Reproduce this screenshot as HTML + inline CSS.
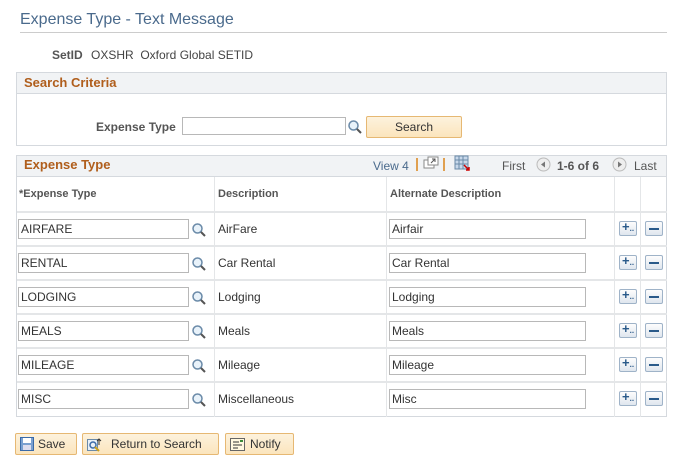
<!DOCTYPE html>
<html><head><style>
*{box-sizing:border-box;margin:0;padding:0}
body{width:699px;height:466px;background:#fff;font-family:"Liberation Sans",Arial,sans-serif;font-size:12px;color:#333;position:relative;overflow:hidden}
.a{position:absolute}
.lbl{font-weight:bold;color:#555}
.inp{position:absolute;height:20px;border:1px solid #b8b8b8;background:#fff;font-size:12px;color:#333;padding:2px 2px;line-height:14px}
.mag{position:absolute;width:16px;height:16px}
.hl{position:absolute;height:1px;background:#e4e6e8}
.vl{position:absolute;width:1px;background:#e4e6e8}
.pb{position:absolute;width:18px;height:15px;border:1px solid #9fb3c8;background:linear-gradient(#fdfdfd,#dfe6ee);border-radius:2px}
.btn{position:absolute;height:22px;border:1px solid #e6b873;background:linear-gradient(#fdf2dd,#fbe5bd);border-radius:2px;font-size:12px;color:#333;line-height:20px}
.th{position:absolute;font-weight:bold;color:#555;font-size:11px}
.td{position:absolute;font-size:12px;color:#333}
</style></head><body>
<div class="a" style="left:20px;top:11px;font-size:16px;color:#4a6a8c">Expense Type - Text Message</div>
<div class="a" style="left:20px;top:32px;width:647px;height:1px;background:#ccc"></div>
<div class="a lbl" style="left:52px;top:48px;font-size:12px">SetID</div>
<div class="a" style="left:91px;top:48px;color:#444">OXSHR&nbsp;&nbsp;Oxford Global SETID</div>

<div class="a" style="left:16px;top:72px;width:651px;height:74px;border:1px solid #d5d9de"></div>
<div class="a" style="left:17px;top:73px;width:649px;height:21px;background:#f1f3f5;border-bottom:1px solid #d5d9de"></div>
<div class="a" style="left:24px;top:75px;font-weight:bold;font-size:13px;color:#b05e1c">Search Criteria</div>
<div class="a lbl" style="left:96px;top:120px;font-size:12px">Expense Type</div>
<div class="inp" style="left:182px;top:117px;width:164px;height:18px"></div>
<svg class="mag" style="left:347px;top:119px" viewBox="0 0 16 16"><circle cx="6.5" cy="6.5" r="4.5" fill="#e8f2fa" stroke="#6a8aa8" stroke-width="1.5"/><line x1="10" y1="10" x2="14" y2="14" stroke="#555" stroke-width="2"/></svg>
<div class="btn" style="left:366px;top:116px;width:96px;text-align:center">Search</div>

<div class="a" style="left:16px;top:155px;width:651px;height:262px;border:1px solid #d5d9de;border-top:none"></div>
<div class="a" style="left:16px;top:155px;width:651px;height:22px;background:#f1f3f5;border:1px solid #d5d9de"></div>
<div class="a" style="left:24px;top:157px;font-weight:bold;font-size:13px;color:#b05e1c">Expense Type</div>
<div class="a" style="left:373px;top:159px;color:#4a6a8c">View 4</div>
<div class="a" style="left:416px;top:158px;width:2px;height:13px;background:#e0a050"></div>
<svg class="a" style="left:423px;top:156px" width="16" height="14" viewBox="0 0 16 14"><rect x="1" y="4" width="10" height="8" fill="#fff" stroke="#888"/><rect x="5" y="1" width="10" height="8" fill="#fff" stroke="#888"/><path d="M8 7l4-4M9 3h3v3" stroke="#555" fill="none"/></svg>
<div class="a" style="left:443px;top:158px;width:2px;height:13px;background:#e0a050"></div>
<svg class="a" style="left:454px;top:155px" width="16" height="16" viewBox="0 0 16 16"><rect x="1" y="1" width="13" height="13" fill="#c8d8ea" stroke="#6a8aa8"/><path d="M1 5h13M1 9h13M5 1v13M9 1v13" stroke="#6a8aa8"/><path d="M10 10l5 5M12 15h3v-3" stroke="#c00" stroke-width="1.5" fill="none"/></svg>
<div class="a" style="left:502px;top:159px;color:#555">First</div>
<svg class="a" style="left:536px;top:157px" width="15" height="15"><circle cx="7.5" cy="7.5" r="6.5" fill="#eee" stroke="#bbb"/><path d="M9 4.5v6l-4-3z" fill="#777"/></svg>
<div class="a" style="left:557px;top:159px;font-weight:bold;color:#555">1-6 of 6</div>
<svg class="a" style="left:612px;top:157px" width="15" height="15"><circle cx="7.5" cy="7.5" r="6.5" fill="#eee" stroke="#bbb"/><path d="M6 4.5v6l4-3z" fill="#777"/></svg>
<div class="a" style="left:634px;top:159px;color:#555">Last</div>

<div class="vl" style="left:214px;top:177px;height:240px"></div>
<div class="vl" style="left:386px;top:177px;height:240px"></div>
<div class="vl" style="left:614px;top:177px;height:240px"></div>
<div class="vl" style="left:640px;top:177px;height:240px"></div>
<div class="th" style="left:19px;top:188px">*Expense Type</div>
<div class="th" style="left:218px;top:188px">Description</div>
<div class="th" style="left:390px;top:188px">Alternate Description</div>

<div class="hl" style="left:17px;top:211px;width:650px;height:2px"></div>
<div class="hl" style="left:17px;top:245px;width:650px;height:2px"></div>
<div class="hl" style="left:17px;top:279px;width:650px;height:2px"></div>
<div class="hl" style="left:17px;top:313px;width:650px;height:2px"></div>
<div class="hl" style="left:17px;top:347px;width:650px;height:2px"></div>
<div class="hl" style="left:17px;top:381px;width:650px;height:2px"></div>

<!-- rows -->
<div class="inp" style="left:18px;top:219px;width:171px">AIRFARE</div>
<svg class="mag" style="left:191px;top:222px" viewBox="0 0 16 16"><circle cx="6.5" cy="6.5" r="4.5" fill="#e8f2fa" stroke="#6a8aa8" stroke-width="1.5"/><line x1="10" y1="10" x2="14" y2="14" stroke="#555" stroke-width="2"/></svg>
<div class="td" style="left:218px;top:222px">AirFare</div>
<div class="inp" style="left:389px;top:219px;width:197px">Airfair</div>
<div class="pb" style="left:619px;top:221px"></div><div class="a" style="left:622px;top:219px;font-weight:bold;color:#2a5a8a;font-size:13px">+<span style="font-size:8px">..</span></div>
<div class="pb" style="left:645px;top:221px"></div><div class="a" style="left:649px;top:228px;width:10px;height:2px;background:#2a5a8a"></div>

<div class="inp" style="left:18px;top:253px;width:171px">RENTAL</div>
<svg class="mag" style="left:191px;top:256px" viewBox="0 0 16 16"><circle cx="6.5" cy="6.5" r="4.5" fill="#e8f2fa" stroke="#6a8aa8" stroke-width="1.5"/><line x1="10" y1="10" x2="14" y2="14" stroke="#555" stroke-width="2"/></svg>
<div class="td" style="left:218px;top:256px">Car Rental</div>
<div class="inp" style="left:389px;top:253px;width:197px">Car Rental</div>
<div class="pb" style="left:619px;top:255px"></div><div class="a" style="left:622px;top:253px;font-weight:bold;color:#2a5a8a;font-size:13px">+<span style="font-size:8px">..</span></div>
<div class="pb" style="left:645px;top:255px"></div><div class="a" style="left:649px;top:262px;width:10px;height:2px;background:#2a5a8a"></div>

<div class="inp" style="left:18px;top:287px;width:171px">LODGING</div>
<svg class="mag" style="left:191px;top:290px" viewBox="0 0 16 16"><circle cx="6.5" cy="6.5" r="4.5" fill="#e8f2fa" stroke="#6a8aa8" stroke-width="1.5"/><line x1="10" y1="10" x2="14" y2="14" stroke="#555" stroke-width="2"/></svg>
<div class="td" style="left:218px;top:290px">Lodging</div>
<div class="inp" style="left:389px;top:287px;width:197px">Lodging</div>
<div class="pb" style="left:619px;top:289px"></div><div class="a" style="left:622px;top:287px;font-weight:bold;color:#2a5a8a;font-size:13px">+<span style="font-size:8px">..</span></div>
<div class="pb" style="left:645px;top:289px"></div><div class="a" style="left:649px;top:296px;width:10px;height:2px;background:#2a5a8a"></div>

<div class="inp" style="left:18px;top:321px;width:171px">MEALS</div>
<svg class="mag" style="left:191px;top:324px" viewBox="0 0 16 16"><circle cx="6.5" cy="6.5" r="4.5" fill="#e8f2fa" stroke="#6a8aa8" stroke-width="1.5"/><line x1="10" y1="10" x2="14" y2="14" stroke="#555" stroke-width="2"/></svg>
<div class="td" style="left:218px;top:324px">Meals</div>
<div class="inp" style="left:389px;top:321px;width:197px">Meals</div>
<div class="pb" style="left:619px;top:323px"></div><div class="a" style="left:622px;top:321px;font-weight:bold;color:#2a5a8a;font-size:13px">+<span style="font-size:8px">..</span></div>
<div class="pb" style="left:645px;top:323px"></div><div class="a" style="left:649px;top:330px;width:10px;height:2px;background:#2a5a8a"></div>

<div class="inp" style="left:18px;top:355px;width:171px">MILEAGE</div>
<svg class="mag" style="left:191px;top:358px" viewBox="0 0 16 16"><circle cx="6.5" cy="6.5" r="4.5" fill="#e8f2fa" stroke="#6a8aa8" stroke-width="1.5"/><line x1="10" y1="10" x2="14" y2="14" stroke="#555" stroke-width="2"/></svg>
<div class="td" style="left:218px;top:358px">Mileage</div>
<div class="inp" style="left:389px;top:355px;width:197px">Mileage</div>
<div class="pb" style="left:619px;top:357px"></div><div class="a" style="left:622px;top:355px;font-weight:bold;color:#2a5a8a;font-size:13px">+<span style="font-size:8px">..</span></div>
<div class="pb" style="left:645px;top:357px"></div><div class="a" style="left:649px;top:364px;width:10px;height:2px;background:#2a5a8a"></div>

<div class="inp" style="left:18px;top:389px;width:171px">MISC</div>
<svg class="mag" style="left:191px;top:392px" viewBox="0 0 16 16"><circle cx="6.5" cy="6.5" r="4.5" fill="#e8f2fa" stroke="#6a8aa8" stroke-width="1.5"/><line x1="10" y1="10" x2="14" y2="14" stroke="#555" stroke-width="2"/></svg>
<div class="td" style="left:218px;top:392px">Miscellaneous</div>
<div class="inp" style="left:389px;top:389px;width:197px">Misc</div>
<div class="pb" style="left:619px;top:391px"></div><div class="a" style="left:622px;top:389px;font-weight:bold;color:#2a5a8a;font-size:13px">+<span style="font-size:8px">..</span></div>
<div class="pb" style="left:645px;top:391px"></div><div class="a" style="left:649px;top:398px;width:10px;height:2px;background:#2a5a8a"></div>

<!-- buttons -->
<div class="btn" style="left:15px;top:433px;width:62px"><svg style="position:absolute;left:4px;top:3px" width="14" height="14"><rect x="0.5" y="0.5" width="13" height="13" fill="#7aa0d0" stroke="#3a6aa8"/><rect x="3" y="1" width="8" height="5" fill="#fff"/><rect x="3" y="8" width="8" height="5" fill="#dde"/></svg><span style="position:absolute;left:22px">Save</span></div>
<div class="btn" style="left:82px;top:433px;width:137px"><svg style="position:absolute;left:4px;top:3px" width="16" height="15"><rect x="0.5" y="2.5" width="10" height="11" fill="#e8f0f8" stroke="#6a8aa8"/><circle cx="6" cy="8" r="3" fill="none" stroke="#3a6aa8" stroke-width="1.5"/><path d="M8 10l4 4" stroke="#c9a020" stroke-width="2"/><path d="M12 8V2M10 4l2-2 2 2" stroke="#333" fill="none"/></svg><span style="position:absolute;left:28px">Return to Search</span></div>
<div class="btn" style="left:225px;top:433px;width:69px"><svg style="position:absolute;left:4px;top:4px" width="15" height="13"><rect x="0.5" y="0.5" width="14" height="12" fill="#fff8e0" stroke="#666"/><path d="M3 4h6M3 7h9M3 10h5" stroke="#333"/><path d="M10 3h3" stroke="#3a8a3a" stroke-width="2"/></svg><span style="position:absolute;left:24px">Notify</span></div>
</body></html>
